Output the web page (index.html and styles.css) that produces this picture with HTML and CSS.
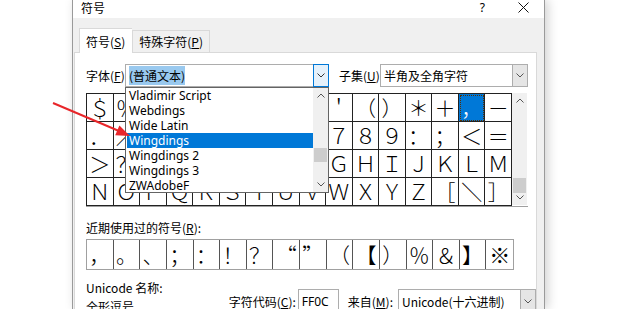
FILE: index.html
```html
<!DOCTYPE html>
<html>
<head>
    <title>符号</title>
    <link rel="stylesheet" href="styles.css">
</head>
<body>
    <div class="dialog">
        <div class="title-bar">
            <span class="title">符号</span>
            <span class="help">?</span>
            <span class="close">
                <svg width="11" height="11" viewBox="0 0 11 11"><path d="M0.5 0.5 L10.5 10.5 M10.5 0.5 L0.5 10.5" stroke="#111" stroke-width="1"/></svg>
            </span>
        </div>
        <div class="dialog-body">
            <div class="tabs">
                <div class="tab active">符号(<u>S</u>)</div>
                <div class="tab">特殊字符(<u>P</u>)</div>
            </div>
            <div class="panel">
                <div class="font-row">
                    <span class="field-label">字体(<u>F</u>):</span>
                    <div class="combo font-combo">
                        <span class="combo-text"><span class="selected-text">(普通文本)</span></span>
                        <span class="combo-arrow focused">
                            <svg width="8" height="5" viewBox="0 0 8 5"><path d="M0.5 0.5 L4 4 L7.5 0.5" fill="none" stroke="#333"/></svg>
                        </span>
                        <div class="font-list">
                            <div class="font-items">
                                <div class="font-item">Vladimir Script</div>
                                <div class="font-item">Webdings</div>
                                <div class="font-item">Wide Latin</div>
                                <div class="font-item selected">Wingdings</div>
                                <div class="font-item">Wingdings 2</div>
                                <div class="font-item">Wingdings 3</div>
                                <div class="font-item">ZWAdobeF</div>
                            </div>
                            <div class="scrollbar list-scroll">
                                <span class="scroll-btn">
                                    <svg width="8" height="5" viewBox="0 0 8 5"><path d="M0.5 4.5 L4 1 L7.5 4.5" fill="none" stroke="#555"/></svg>
                                </span>
                                <span class="scroll-track"><span class="scroll-thumb list-thumb"></span></span>
                                <span class="scroll-btn">
                                    <svg width="8" height="5" viewBox="0 0 8 5"><path d="M0.5 0.5 L4 4 L7.5 0.5" fill="none" stroke="#555"/></svg>
                                </span>
                            </div>
                        </div>
                    </div>
                    <span class="field-label subset-label">子集(<u>U</u>):</span>
                    <div class="combo subset-combo">
                        <span class="combo-text">半角及全角字符</span>
                        <span class="combo-arrow">
                            <svg width="8" height="5" viewBox="0 0 8 5"><path d="M0.5 0.5 L4 4 L7.5 0.5" fill="none" stroke="#555"/></svg>
                        </span>
                    </div>
                </div>

                <div class="symbol-area">
                    <div class="symbol-grid" id="symbolGrid"></div>
                    <div class="scrollbar grid-scroll">
                        <span class="scroll-btn">
                            <svg width="8" height="5" viewBox="0 0 8 5"><path d="M0.5 4.5 L4 1 L7.5 4.5" fill="none" stroke="#555"/></svg>
                        </span>
                        <span class="scroll-track"><span class="scroll-thumb grid-thumb"></span></span>
                        <span class="scroll-btn">
                            <svg width="8" height="5" viewBox="0 0 8 5"><path d="M0.5 0.5 L4 4 L7.5 0.5" fill="none" stroke="#555"/></svg>
                        </span>
                    </div>
                </div>

                <div class="recent-label">近期使用过的符号(<u>R</u>):</div>
                <div class="recent-grid" id="recentGrid"></div>

                <div class="info-row">
                    <div class="name-block">
                        <div class="name-label">Unicode 名称:</div>
                        <div class="name-value">全形逗号</div>
                    </div>
                    <div class="code-block">
                        <span class="field-label">字符代码(<u>C</u>):</span>
                        <div class="text-box code-box">FF0C</div>
                        <span class="field-label from-label">来自(<u>M</u>):</span>
                        <div class="combo from-combo">
                            <span class="combo-text">Unicode(十六进制)</span>
                            <span class="combo-arrow">
                                <svg width="8" height="5" viewBox="0 0 8 5"><path d="M0.5 0.5 L4 4 L7.5 0.5" fill="none" stroke="#555"/></svg>
                            </span>
                        </div>
                    </div>
                </div>
            </div>
        </div>
    </div>

    <svg class="pointer-arrow" width="620" height="309" viewBox="0 0 620 309">
        <line x1="53" y1="103" x2="119" y2="131" stroke="#e8262a" stroke-width="2"/>
        <polygon points="130,136 119.4,125.4 115.2,135.2" fill="#e8262a"/>
    </svg>

    <script>
        const gridChars = [
            '＄', '％', '＆', '＇', '（', '）', '＊', '＋', '＄', '＇', '（', '）', '＊', '＋', '，', '－',
            '．', '／', '０', '１', '２', '３', '４', '５', '６', '７', '８', '９', '：', '；', '＜', '＝',
            '＞', '？', '＠', 'Ａ', 'Ｂ', 'Ｃ', 'Ｄ', 'Ｅ', 'Ｆ', 'Ｇ', 'Ｈ', 'Ｉ', 'Ｊ', 'Ｋ', 'Ｌ', 'Ｍ',
            'Ｎ', 'Ｏ', 'Ｐ', 'Ｑ', 'Ｒ', 'Ｓ', 'Ｔ', 'Ｕ', 'Ｖ', 'Ｗ', 'Ｘ', 'Ｙ', 'Ｚ', '［', '＼', '］'
        ];
        const recentChars = ['，', '。', '、', '；', '：', '！', '？', '“', '”', '（', '【', '）', '％', '＆', '】', '※'];

        function renderCells(id, chars, selectedIndex) {
            document.getElementById(id).innerHTML = chars.map((ch, i) =>
                `<div class="cell${i === selectedIndex ? ' selected' : ''}">${ch}</div>`
            ).join('');
        }

        renderCells('symbolGrid', gridChars, 14);
        renderCells('recentGrid', recentChars, -1);
    </script>
</body>
</html>
```

FILE: styles.css
```css
body {
    margin: 0;
    background: white;
    font-family: "Noto Sans CJK SC", sans-serif;
    font-size: 12px;
    color: #000;
    overflow: hidden;
}
u {
    text-decoration: underline;
    text-underline-offset: 1px;
}
.dialog {
    margin-left: 72px;
    width: 471px;
    height: 309px;
    border-left: 1px solid #9a9a9a;
    border-right: 1px solid #9a9a9a;
    box-shadow: 3px 0 10px rgba(0,0,0,0.18);
    background: #f0f0f0;
    position: relative;
    overflow: hidden;
}
.title-bar {
    height: 18px;
    background: white;
    display: flex;
    align-items: center;
    padding-left: 8px;
}
.title {
    flex: 1;
    margin-top: -4px;
}
.help {
    margin-top: -4px;
    font-family: "Noto Sans", sans-serif;
    font-size: 12px;
    margin-right: 33px;
}
.close {
    display: flex;
    margin-top: -4px;
    margin-right: 15px;
}
.dialog-body {
    padding: 10px 7px 0 1px;
}
.tabs {
    display: flex;
    align-items: flex-end;
    margin-left: 5px;
    height: 24px;
    position: relative;
    z-index: 1;
}
.tab {
    height: 21px;
    padding: 0 6px;
    display: flex;
    align-items: center;
    border: 1px solid #d9d9d9;
    border-bottom: none;
    background: #f0f0f0;
}
.tab.active {
    height: 24px;
    background: white;
    padding: 0 7px 0 6px;
    margin-bottom: -1px;
    border-right: none;
}
.panel {
    background: white;
    border: 1px solid #d9d9d9;
    height: 256px;
    padding: 11px 0 0 11px;
}
.font-row {
    display: flex;
    align-items: center;
    height: 23px;
}
.field-label {
    white-space: nowrap;
}
.font-row .field-label:first-child {
    width: 39px;
}
.combo {
    height: 23px;
    box-sizing: border-box;
    border: 1px solid #adadad;
    background: white;
    display: flex;
    align-items: center;
    position: relative;
}
.combo-text {
    flex: 1;
    padding-left: 3px;
    white-space: nowrap;
}
.selected-text {
    background: #99c9ef;
    padding: 1px 0;
}
.combo-arrow {
    width: 15px;
    height: 21px;
    box-sizing: border-box;
    background: #e5e5e5;
    border-left: 1px solid #adadad;
    display: flex;
    align-items: center;
    justify-content: center;
}
.combo-arrow.focused {
    background: #e5f1fb;
    border: 1px solid #0078d7;
    height: 23px;
    width: 16px;
    margin-right: -1px;
}
.font-combo {
    width: 204px;
}
.subset-label {
    margin-left: 10px;
    width: 41px;
}
.subset-combo {
    width: 148px;
}
.font-list {
    position: absolute;
    top: 22px;
    left: -1px;
    width: 204px;
    height: 106px;
    box-sizing: border-box;
    border: 1px solid #646464;
    background: white;
    display: flex;
    z-index: 5;
    font-family: "Noto Sans", sans-serif;
    font-size: 12px;
}
.font-items {
    flex: 1;
    padding-left: 1px;
}
.font-item {
    height: 15px;
    line-height: 15px;
    padding-left: 2px;
    white-space: nowrap;
}
.font-item.selected {
    background: #0078d7;
    color: white;
}
.scrollbar {
    width: 15px;
    background: #f0f0f0;
    display: flex;
    flex-direction: column;
}
.scroll-btn {
    height: 15px;
    display: flex;
    align-items: center;
    justify-content: center;
}
.scroll-track {
    flex: 1;
    position: relative;
}
.scroll-thumb {
    position: absolute;
    left: 1px;
    right: 1px;
    background: #cdcdcd;
}
.list-thumb {
    top: 45px;
    height: 14px;
}
.grid-thumb {
    top: 70px;
    height: 15px;
}
.symbol-area {
    display: flex;
    margin-top: 6px;
    width: 442px;
    height: 113px;
    border-bottom: 1px solid #a0a0a0;
}
.symbol-grid {
    width: 426px;
    display: grid;
    grid-template-columns: repeat(16, 1fr);
    grid-template-rows: repeat(4, 28px);
    border-top: 1px solid #222;
    border-left: 1px solid #222;
    box-sizing: border-box;
}
.cell {
    border-right: 1px solid #222;
    border-bottom: 1px solid #222;
    display: flex;
    align-items: center;
    justify-content: center;
    font-size: 21px;
    font-weight: 300;
    line-height: 1.2;
}
.cell.selected {
    background: #0078d7;
    color: white;
    outline: 1px dotted #5a3000;
    outline-offset: -2px;
}
.grid-scroll {
    height: 112px;
}
.recent-label {
    margin-top: 13px;
    line-height: 16px;
}
.recent-grid {
    margin-top: 3px;
    width: 428px;
    height: 31px;
    display: grid;
    grid-template-columns: repeat(16, 1fr);
    border: 1px solid #a0a0a0;
    box-sizing: border-box;
}
.recent-grid .cell {
    border-bottom: none;
    border-right: 1px solid #555;
}
.recent-grid .cell:last-child {
    border-right: none;
}
.info-row {
    display: flex;
    align-items: flex-start;
    margin-top: 10px;
}
.name-block {
    width: 149px;
    line-height: 16px;
}
.name-value {
    margin-top: 3px;
}
.code-block {
    display: flex;
    align-items: center;
    margin-top: 9px;
}
.text-box {
    height: 24px;
    box-sizing: border-box;
    border: 1px solid #adadad;
    background: white;
    display: flex;
    align-items: center;
    padding-left: 3px;
}
.code-box {
    width: 41px;
    margin-left: 2px;
    font-family: "Noto Sans", sans-serif;
}
.from-label {
    margin-left: 9px;
}
.from-combo {
    width: 138px;
    height: 24px;
    margin-left: 5px;
}
.from-combo .combo-arrow {
    height: 22px;
}
.pointer-arrow {
    position: absolute;
    left: 0;
    top: 0;
    pointer-events: none;
    z-index: 10;
}
```
